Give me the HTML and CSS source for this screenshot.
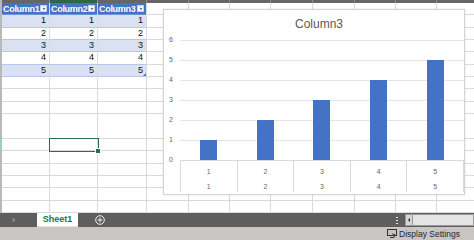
FILE: index.html
```
<!DOCTYPE html>
<html lang="en">
<head>
    <meta charset="UTF-8">
    <meta name="viewport" content="width=device-width, initial-scale=1.0">
    <title>Book1 - Excel</title>
    <link rel="stylesheet" href="styles.css">
</head>
<body>
<div class="app">
    <div class="sheet">
        <div class="rowhead"></div>

        <div class="col w48">
            <div class="colhead"></div>
            <div class="th">Column1<span class="filter"></span></div>
            <div class="td band">1</div>
            <div class="td">2</div>
            <div class="td band">3</div>
            <div class="td">4</div>
            <div class="td band">5</div>
        </div>
        <div class="col w48">
            <div class="colhead active"></div>
            <div class="th">Column2<span class="filter"></span></div>
            <div class="td band">1</div>
            <div class="td">2</div>
            <div class="td band">3</div>
            <div class="td">4</div>
            <div class="td band">5</div>
        </div>
        <div class="col w49">
            <div class="colhead"></div>
            <div class="th">Column3<span class="filter"></span></div>
            <div class="td band">1</div>
            <div class="td">2</div>
            <div class="td band">3</div>
            <div class="td">4</div>
            <div class="td band last">5</div>
        </div>
        <div class="col w42"><div class="colhead"></div></div>
        <div class="col w41"><div class="colhead"></div></div>
        <div class="col w41"><div class="colhead"></div></div>
        <div class="col w42"><div class="colhead"></div></div>
        <div class="col w42"><div class="colhead"></div></div>
        <div class="col w41"><div class="colhead"></div></div>
        <div class="col w41"><div class="colhead"></div></div>
        <div class="col w42"><div class="colhead"></div></div>

        <!-- active cell B12 -->
        <div class="selection"><span class="handle"></span></div>

        <div class="chart">
            <div class="chart-title">Column3</div>
            <div class="plot">
                <div class="yaxis">
                    <span>6</span><span>5</span><span>4</span><span>3</span><span>2</span><span>1</span><span>0</span>
                </div>
                <div class="plot-area">
                    <div class="slot"><div class="bar" style="height:20px"></div></div>
                    <div class="slot"><div class="bar" style="height:40px"></div></div>
                    <div class="slot"><div class="bar" style="height:60px"></div></div>
                    <div class="slot"><div class="bar" style="height:80px"></div></div>
                    <div class="slot"><div class="bar" style="height:100px"></div></div>
                </div>
            </div>
            <div class="datatable">
                <div class="dt-col"><span>1</span><span>1</span></div>
                <div class="dt-col"><span>2</span><span>2</span></div>
                <div class="dt-col"><span>3</span><span>3</span></div>
                <div class="dt-col"><span>4</span><span>4</span></div>
                <div class="dt-col"><span>5</span><span>5</span></div>
            </div>
        </div>
    </div>

    <div class="tabbar">
        <span class="nav">&#8250;</span>
        <div class="tab">Sheet1</div>
        <span class="addsheet">
            <svg width="10" height="10" viewBox="0 0 10 10">
                <circle cx="5" cy="5" r="4.3" fill="none" stroke="#f2f2f2" stroke-width="1"/>
                <path d="M5 2.6v4.8M2.6 5h4.8" stroke="#f2f2f2" stroke-width="1"/>
            </svg>
        </span>
        <span class="spacer"></span>
        <span class="dots"></span>
        <div class="hscroll">
            <span class="hscroll-btn"></span>
            <span class="hscroll-track"></span>
        </div>
    </div>

    <div class="status">
        <span class="display">
            <svg width="10" height="9" viewBox="0 0 10 9">
                <rect x="0.5" y="0.5" width="9" height="6" fill="none" stroke="#333" stroke-width="1"/>
                <path d="M3 8.5h4" stroke="#333" stroke-width="1"/>
                <path d="M5 4l2.5 4.5 0.8-1.6 1.6 -0.3z" fill="#333"/>
            </svg>
            Display Settings
        </span>
    </div>
</div>
</body>
</html>
```

FILE: styles.css
```
/* Common styles */
body {
    margin: 0;
    font-family: "Liberation Sans", Arial, sans-serif;
    background-color: #ffffff;
}

.app {
    width: 474px;
    height: 240px;
    overflow: hidden;
    display: flex;
    flex-direction: column;
}

/* Worksheet */
.sheet {
    position: relative;
    height: 213px;
    display: flex;
    overflow: hidden;
    background-color: #ffffff;
    background-image: repeating-linear-gradient(to bottom, transparent 0, transparent 11.35px, #dadada 11.35px, #dadada 12.35px);
    background-position: 0 3px;
}

.rowhead {
    flex: none;
    width: 2px;
    background: linear-gradient(to bottom, #b9b9b9 0, #b9b9b9 139px, #9fd0b4 139px, #9fd0b4 151px, #b9b9b9 151px);
}

.col {
    flex: none;
    box-sizing: border-box;
    border-right: 1px solid #dadada;
    display: flex;
    flex-direction: column;
}
.w48 { width: 48px; }
.w49 { width: 49px; }
.w42 { width: 42px; }
.w41 { width: 41px; }

.colhead {
    height: 3px;
    background-color: #666666;
    box-shadow: 1px 0 0 #8c8c8c;
}
.colhead.active {
    background-color: #2f6644;
}

/* Table */
.th {
    height: 12.35px;
    box-sizing: border-box;
    background-color: #4472c4;
    color: #ffffff;
    font-size: 9px;
    font-weight: bold;
    letter-spacing: -0.3px;
    line-height: 12px;
    padding-left: 1px;
    display: flex;
    align-items: center;
    justify-content: space-between;
    border-bottom: 1px solid #6f93d3;
}

.filter {
    width: 7px;
    height: 7px;
    margin-right: 2px;
    background-color: #f4f4f4;
    border: 1px solid #c8d2e6;
    box-sizing: border-box;
    position: relative;
}
.filter::after {
    content: "";
    position: absolute;
    left: 1.5px;
    top: 2px;
    border-left: 1.5px solid transparent;
    border-right: 1.5px solid transparent;
    border-top: 2px solid #333333;
}

.td {
    height: 12.35px;
    box-sizing: border-box;
    border-bottom: 1px solid #b7c7e6;
    background-color: #ffffff;
    font-size: 9px;
    line-height: 11px;
    text-align: right;
    padding-right: 3px;
    color: #111111;
}
.td.band {
    background-color: #d9e1f2;
}
.td.last {
    position: relative;
}
.td.last::after {
    content: "";
    position: absolute;
    right: 0;
    bottom: 0;
    border-left: 3px solid transparent;
    border-bottom: 3px solid #4472c4;
}

.selection {
    position: absolute;
    left: 49px;
    top: 138px;
    width: 50px;
    height: 14px;
    box-sizing: border-box;
    border: 1.5px solid #217346;
}
.selection .handle {
    position: absolute;
    right: -3px;
    bottom: -3px;
    width: 4px;
    height: 4px;
    background-color: #217346;
    border: 1px solid #ffffff;
}

/* Chart */
.chart {
    position: absolute;
    left: 163px;
    top: 9px;
    width: 302px;
    height: 186px;
    box-sizing: border-box;
    background-color: #ffffff;
    border: 1px solid #d4d4d4;
    box-shadow: 0 0 2px rgba(0, 0, 0, 0.12);
    display: flex;
    flex-direction: column;
}

.chart-title {
    padding-top: 3px;
    padding-left: 10px;
    height: 22px;
    line-height: 22px;
    text-align: center;
    font-size: 12px;
    color: #595959;
}

.plot {
    margin-top: 5px;
    height: 121px;
    display: flex;
    align-items: flex-start;
}

.yaxis {
    width: 16px;
    margin-top: -10px;
    display: flex;
    flex-direction: column;
    flex: none;
}
.yaxis span {
    height: 20px;
    line-height: 20px;
    font-size: 7px;
    color: #666666;
    text-align: right;
    padding-right: 7px;
}

.plot-area {
    width: 284px;
    height: 120px;
    border-bottom: 1px solid #d9d9d9;
    background-image: repeating-linear-gradient(to bottom, #e6e6e6 0, #e6e6e6 1px, transparent 1px, transparent 20px);
    display: flex;
    align-items: flex-end;
}

.slot {
    flex: 1;
    display: flex;
    justify-content: center;
}

.bar {
    width: 17px;
    background-color: #4472c4;
}

.datatable {
    margin-left: 16px;
    width: 284px;
    display: flex;
}

.dt-col {
    flex: 1;
    display: flex;
    flex-direction: column;
    align-items: center;
    padding-top: 3px;
    height: 31px;
    box-sizing: border-box;
    border-left: 1px solid #d9d9d9;
}
.dt-col:last-child {
    border-right: 1px solid #d9d9d9;
}
.dt-col span {
    line-height: 15px;
    font-size: 7px;
    color: #666666;
}

/* Sheet tabs */
.tabbar {
    height: 14px;
    background-color: #5e5e5e;
    display: flex;
    align-items: center;
}

.nav {
    width: 37px;
    padding-left: 12px;
    box-sizing: border-box;
    color: #c8c8c8;
    font-size: 9px;
}

.tab {
    width: 41px;
    height: 14px;
    box-sizing: border-box;
    background-color: #ffffff;
    color: #217346;
    font-size: 9px;
    font-weight: bold;
    text-align: center;
    line-height: 13px;
    border-bottom: 1px solid #e3e3e3;
}

.addsheet {
    margin-left: 17px;
    display: flex;
}

.spacer {
    flex: 1;
}

.dots {
    width: 2px;
    height: 9px;
    margin-right: 7px;
    background-image: radial-gradient(circle, #e8e8e8 0.8px, transparent 1px);
    background-size: 2px 3px;
}

.hscroll {
    width: 69px;
    height: 12px;
    display: flex;
}

.hscroll-btn {
    width: 8px;
    box-sizing: border-box;
    background-color: #d6d6d6;
    border: 1px solid #9a9a9a;
    position: relative;
}
.hscroll-btn::after {
    content: "";
    position: absolute;
    left: 2px;
    top: 3px;
    border-top: 2px solid transparent;
    border-bottom: 2px solid transparent;
    border-right: 2px solid #222222;
}

.hscroll-track {
    flex: 1;
    box-sizing: border-box;
    background-color: #e4e4e4;
    border: 1px solid #9a9a9a;
    border-left: none;
}

/* Status bar */
.status {
    height: 13px;
    background-color: #c8c6c4;
    display: flex;
    justify-content: flex-end;
    align-items: center;
    padding-right: 14px;
}

.display {
    display: flex;
    align-items: center;
    gap: 2px;
    font-size: 8.5px;
    color: #262626;
}
```
